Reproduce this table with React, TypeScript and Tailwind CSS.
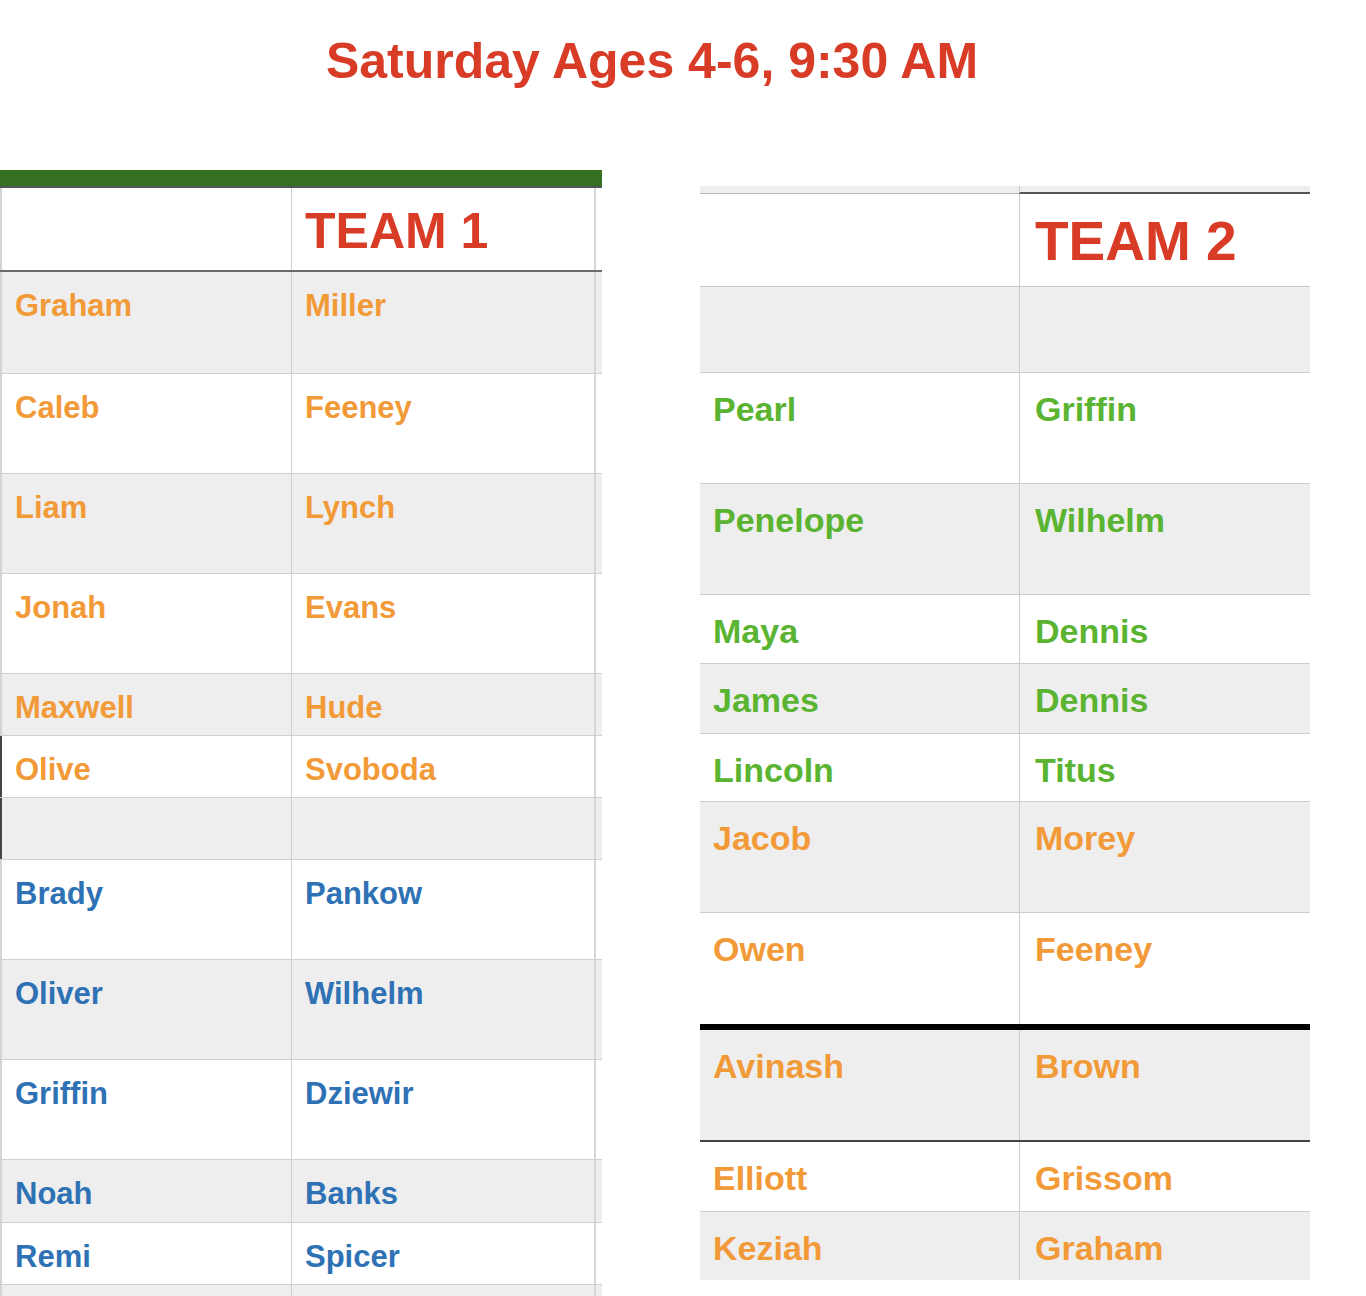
import React from "react";

type Row = { h: string; gray: boolean; a?: string; b?: string; c: string; extra?: string };

const O = "text-[#f29a38]";
const B = "text-[#2e72b5]";
const G = "text-[#5ab431]";

const leftRows: Row[] = [
  { h: "h-[102px]", gray: true, a: "Graham", b: "Miller", c: O },
  { h: "h-[100px]", gray: false, a: "Caleb", b: "Feeney", c: O },
  { h: "h-[100px]", gray: true, a: "Liam", b: "Lynch", c: O },
  { h: "h-[100px]", gray: false, a: "Jonah", b: "Evans", c: O },
  { h: "h-[62px]", gray: true, a: "Maxwell", b: "Hude", c: O },
  { h: "h-[62px]", gray: false, a: "Olive", b: "Svoboda", c: O, extra: "dark" },
  { h: "h-[62px]", gray: true, c: O, extra: "dark" },
  { h: "h-[100px]", gray: false, a: "Brady", b: "Pankow", c: B },
  { h: "h-[100px]", gray: true, a: "Oliver", b: "Wilhelm", c: B },
  { h: "h-[100px]", gray: false, a: "Griffin", b: "Dziewir", c: B },
  { h: "h-[63px]", gray: true, a: "Noah", b: "Banks", c: B },
  { h: "h-[62px]", gray: false, a: "Remi", b: "Spicer", c: B },
  { h: "h-[40px]", gray: true, c: B },
];

const rightRows: Row[] = [
  { h: "h-[86px]", gray: true, c: G },
  { h: "h-[111px]", gray: false, a: "Pearl", b: "Griffin", c: G },
  { h: "h-[111px]", gray: true, a: "Penelope", b: "Wilhelm", c: G },
  { h: "h-[69px]", gray: false, a: "Maya", b: "Dennis", c: G },
  { h: "h-[70px]", gray: true, a: "James", b: "Dennis", c: G },
  { h: "h-[68px]", gray: false, a: "Lincoln", b: "Titus", c: G },
  { h: "h-[111px]", gray: true, a: "Jacob", b: "Morey", c: O },
  { h: "h-[117px]", gray: false, a: "Owen", b: "Feeney", c: O, extra: "thick" },
  { h: "h-[112px]", gray: true, a: "Avinash", b: "Brown", c: O, extra: "darkb" },
  { h: "h-[70px]", gray: false, a: "Elliott", b: "Grissom", c: O },
  { h: "h-[68px]", gray: true, a: "Keziah", b: "Graham", c: O, extra: "last" },
];

function LeftRow({ r }: { r: Row }) {
  const bg = r.gray ? "bg-[#eeeeee]" : "bg-white";
  const lb = r.extra === "dark" ? "border-[#444444]" : "border-[#d4d4d4]";
  return (
    <div className={`flex ${r.h} ${bg} border-b border-[#d0d0d0]`}>
      <div className={`w-[291px] border-l-2 ${lb} pl-[13px] pt-[18px] text-[31px] leading-none ${r.c}`}>{r.a}</div>
      <div className={`w-[303px] border-l border-[#d0d0d0] pl-[13px] pt-[18px] text-[31px] leading-none ${r.c}`}>{r.b}</div>
      <div className="w-[8px] border-l-2 border-[#d6d6d6]" />
    </div>
  );
}

function RightRow({ r }: { r: Row }) {
  const bg = r.gray ? "bg-[#eeeeee]" : "bg-white";
  let bb = "border-b border-[#cccccc]";
  if (r.extra === "thick") bb = "border-b-[6px] border-black";
  if (r.extra === "darkb") bb = "border-b-2 border-[#444444]";
  if (r.extra === "last") bb = "";
  return (
    <div className={`flex ${r.h} ${bg} ${bb}`}>
      <div className={`w-[319px] pl-[13px] pt-[19px] text-[34px] leading-none ${r.c}`}>{r.a}</div>
      <div className={`w-[291px] border-l border-[#cccccc] pl-[15px] pt-[19px] text-[34px] leading-none ${r.c}`}>{r.b}</div>
    </div>
  );
}

export default function App() {
  return (
    <div className="w-[1366px] h-[1296px] overflow-hidden bg-white font-['Liberation_Sans',Arial,sans-serif] font-bold">
      <h1 className="w-[1304px] pt-[36px] text-center text-[50px] leading-none text-[#d93c26]">
        Saturday Ages 4-6, 9:30 AM
      </h1>
      <div className="flex items-start">
        <div className="mt-[84px] w-[602px]">
          <div className="h-[18px] bg-[#347020] border-b-2 border-[#555555]" />
          <div className="flex h-[84px] bg-white border-b-2 border-[#6a6a6a]">
            <div className="w-[291px] border-l-2 border-[#d4d4d4]" />
            <div className="w-[303px] border-l border-[#d0d0d0] pl-[13px] pt-[18px] text-[50px] leading-none text-[#d93c26]">
              TEAM 1
            </div>
            <div className="w-[8px] border-l-2 border-[#d6d6d6]" />
          </div>
          {leftRows.map((r, i) => (
            <LeftRow key={i} r={r} />
          ))}
        </div>
        <div className="ml-[98px] mt-[100px] w-[610px]">
          <div className="flex h-[8px] bg-[#eeeeee]">
            <div className="w-[319px] border-b border-[#bbbbbb]" />
            <div className="w-[291px] border-l border-[#cccccc] border-b-2 border-b-[#555555]" />
          </div>
          <div className="flex h-[93px] bg-white border-b border-[#c8c8c8]">
            <div className="w-[319px]" />
            <div className="w-[291px] border-l border-[#cccccc] pl-[15px] pt-[20px] text-[55px] leading-none text-[#d93c26]">
              TEAM 2
            </div>
          </div>
          {rightRows.map((r, i) => (
            <RightRow key={i} r={r} />
          ))}
        </div>
      </div>
    </div>
  );
}
